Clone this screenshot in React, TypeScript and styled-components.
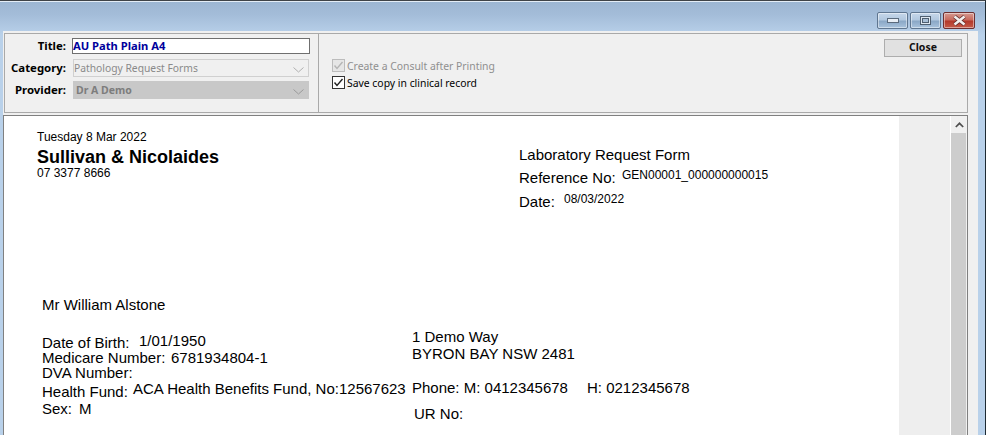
import React from "react";
import styled, { createGlobalStyle } from "styled-components";

const Global = createGlobalStyle`
  html, body { margin: 0; padding: 0; background: #b9d1ea; }
  #root { width: 986px; height: 435px; overflow: hidden; }
`;

const Frame = styled.div`
  width: 986px;
  height: 435px;
  box-sizing: border-box;
  display: flex;
  flex-direction: column;
  overflow: hidden;
  border-top: 1px solid #3f4347;
  border-right: 1px solid #1d2a33;
  background: linear-gradient(180deg, #9cb6d2 0, #a4bdd9 14px, #b9d1ea 34px);
`;

const TitleBar = styled.div`
  height: 30px;
  flex: none;
  box-sizing: border-box;
  display: flex;
  justify-content: flex-end;
  align-items: flex-start;
  padding: 10px 10px 0 0;
  gap: 2px;
  border-top: 1px solid #e4edf6;
`;

const WinButton = styled.div<{ $close?: boolean }>`
  width: ${(p) => (p.$close ? 32 : 31)}px;
  height: 17px;
  box-sizing: border-box;
  display: flex;
  align-items: center;
  justify-content: center;
  border: 1px solid ${(p) => (p.$close ? "#6d2f30" : "#5f7690")};
  border-radius: 2px;
  box-shadow: inset 0 0 0 1px rgba(255, 255, 255, 0.45);
  background: ${(p) =>
    p.$close
      ? "linear-gradient(180deg,#d59a91 0,#c86a5d 45%,#b3392b 55%,#c55a48 100%)"
      : "linear-gradient(180deg,#c6d7ea 0,#b2c8df 45%,#8ba8c6 55%,#a9c3dd 100%)"};
`;

const Client = styled.div`
  flex: 1;
  min-height: 0;
  margin: 0 1px 0 3px;
  display: flex;
  flex-direction: column;
  width: 978px;
  box-sizing: border-box;
`;

const Workspace = styled.div`
  flex: 1;
  min-height: 0;
  width: 975px;
  box-sizing: border-box;
  background: #f0f0f0;
  padding: 2px 10px 0 1px;
  display: flex;
  flex-direction: column;
  gap: 2px;
`;

const Toolbar = styled.div`
  flex: none;
  height: 80px;
  box-sizing: border-box;
  border: 1px solid #a9a9a9;
  display: grid;
  grid-template-columns: 314px 1fr 83px;
  color: #000;
`;

const FieldPanel = styled.div`
  border-right: 1px solid #a9a9a9;
  display: grid;
  grid-template-columns: 61px 238px;
  grid-auto-rows: 22px;
  column-gap: 6px;
  align-content: start;
  padding-top: 4px;
`;

const FieldLabel = styled.label`
  font-family: "Noto Sans", sans-serif;
  font-size: 11.4px;
  font-weight: 700;
  text-align: right;
  line-height: 16px;
  color: #000;
`;

const TitleInput = styled.div`
  height: 16px;
  box-sizing: border-box;
  border: 1px solid #6f6f6f;
  background: #fff;
  color: #00009c;
  font-family: "Noto Sans", sans-serif;
  font-size: 11.2px;
  font-weight: 700;
  line-height: 14px;
`;

const Select = styled.div<{ $filled?: boolean }>`
  height: 18px;
  width: 236px;
  box-sizing: border-box;
  border: 1px solid ${(p) => (p.$filled ? "#c8c8c8" : "#d0d0d0")};
  background: ${(p) => (p.$filled ? "#c8c8c8" : "#f0f0f0")};
  color: ${(p) => (p.$filled ? "#7d7d7d" : "#8a8a8a")};
  font-family: "Noto Sans", sans-serif;
  font-size: ${(p) => (p.$filled ? 10.5 : 10.3)}px;
  font-weight: ${(p) => (p.$filled ? 700 : 400)};
  line-height: 15px;
  padding-left: ${(p) => (p.$filled ? 2 : 0)}px;
  margin-left: 1px;
  display: flex;
  justify-content: space-between;
  align-items: center;
  margin-top: -1px;
`;

const Chevron = styled.svg`
  width: 11px;
  height: 6px;
  margin-right: 4px;
  margin-top: 3px;
  flex: none;
`;

const OptionsPanel = styled.div`
  display: flex;
  flex-direction: column;
  gap: 4px;
  padding: 25px 0 0 13px;
`;

const OptionRow = styled.div<{ $disabled?: boolean }>`
  display: flex;
  align-items: center;
  gap: 2px;
  height: 13px;
  font-family: "Noto Sans", sans-serif;
  font-size: 10.4px;
  color: ${(p) => (p.$disabled ? "#8f8f8f" : "#000")};
`;

const Check = styled.svg`
  width: 13px;
  height: 13px;
  flex: none;
`;

const ClosePanel = styled.div`
  padding: 5px 0 0 0;
`;

const CloseButton = styled.div`
  width: 78px;
  height: 18px;
  box-sizing: border-box;
  border: 1px solid #adadad;
  background: #e1e1e1;
  font-family: "Noto Sans", sans-serif;
  font-size: 10.5px;
  font-weight: 700;
  line-height: 15px;
  text-align: center;
  color: #111;
`;

const DocumentArea = styled.div`
  flex: 1;
  min-height: 0;
  box-sizing: border-box;
  border-top: 1px solid #808080;
  border-left: 1px solid #808080;
  border-right: 1px solid #808080;
  margin-left: -1px;
  display: flex;
  background: #f0f0f0;
`;

const Paper = styled.div`
  position: relative;
  width: 895px;
  flex: none;
  background: #fff;
  overflow: hidden;
  font-family: "Liberation Sans", Arial, sans-serif;
  color: #000;
`;

const Gutter = styled.div`
  flex: 1;
  background: #eeeeee;
`;

const Scrollbar = styled.div`
  width: 17px;
  flex: none;
  background: #f0f0f0;
  border-left: 1px solid #fff;
  box-sizing: border-box;
  display: flex;
  flex-direction: column;
`;

const ScrollUp = styled.div`
  height: 17px;
  flex: none;
  display: flex;
  align-items: center;
  justify-content: center;
`;

const ScrollThumb = styled.div`
  flex: 1;
  background: #cdcdcd;
  margin-right: 1px;
`;

const PaperText = styled.div<{ $x: number; $y: number; $size: number; $bold?: boolean }>`
  position: absolute;
  left: ${(p) => p.$x}px;
  top: ${(p) => p.$y}px;
  font-size: ${(p) => p.$size}px;
  font-weight: ${(p) => (p.$bold ? 700 : 400)};
  line-height: ${(p) => (p.$size >= 15 ? 0.9 : 1)};
  white-space: pre;
`;

const items: [number, number, number, string, boolean?][] = [
  [33, 15, 12, "Tuesday 8 Mar 2022"],
  [33, 33, 18, "Sullivan & Nicolaides", true],
  [33, 51, 12, "07 3377 8666"],
  [515, 32, 15, "Laboratory Request Form"],
  [515, 55, 15, "Reference No:"],
  [618, 53, 12, "GEN00001_000000000015"],
  [515, 79, 15, "Date:"],
  [560, 77, 12, "08/03/2022"],
  [38, 182, 15, "Mr William Alstone"],
  [38, 220, 15, "Date of Birth:"],
  [135, 218, 15, "1/01/1950"],
  [38, 235, 15, "Medicare Number:"],
  [167, 235, 15, "6781934804-1"],
  [38, 250, 15, "DVA Number:"],
  [38, 269, 15, "Health Fund:"],
  [129, 266, 15, "ACA Health Benefits Fund, No:12567623"],
  [38, 286, 15, "Sex:"],
  [75, 286, 15, "M"],
  [408, 214, 15, "1 Demo Way"],
  [408, 231, 15, "BYRON BAY NSW 2481"],
  [408, 265, 15, "Phone: M: 0412345678"],
  [583, 265, 15, "H: 0212345678"],
  [410, 291, 15, "UR No:"],
];

const ChevronIcon = ({ color }: { color: string }) => (
  <Chevron viewBox="0 0 11 6">
    <path d="M0.5 0.5 L5.5 5 L10.5 0.5" fill="none" stroke={color} strokeWidth="1" />
  </Chevron>
);

const CheckIcon = ({ disabled }: { disabled?: boolean }) => (
  <Check viewBox="0 0 13 13">
    <rect x="0.5" y="0.5" width="12" height="12" fill={disabled ? "#e6e6e6" : "#fff"} stroke={disabled ? "#bcbcbc" : "#333"} />
    <path d="M2.5 6.5 L5 9.5 L10.5 3" fill="none" stroke={disabled ? "#b5b5b5" : "#222"} strokeWidth="1.4" />
  </Check>
);

export default function App() {
  return (
    <>
      <Global />
      <Frame>
        <TitleBar>
          <WinButton>
            <svg width="12" height="5" viewBox="0 0 12 5">
              <rect x="0.5" y="0.5" width="11" height="4" fill="#e8eef5" stroke="#5a6a7c" />
            </svg>
          </WinButton>
          <WinButton>
            <svg width="11" height="9" viewBox="0 0 11 9">
              <rect x="0.5" y="0.5" width="10" height="8" fill="#dfe8f1" stroke="#4f5f70" />
              <rect x="2.5" y="2.5" width="6" height="4" fill="#a9bfd6" stroke="#4f5f70" />
            </svg>
          </WinButton>
          <WinButton $close>
            <svg width="15" height="11" viewBox="0 0 15 11">
              <path d="M2.5 1.5 L12.5 9.5 M12.5 1.5 L2.5 9.5" stroke="#5a2a2a" strokeWidth="4" />
              <path d="M2.5 1.5 L12.5 9.5 M12.5 1.5 L2.5 9.5" stroke="#f3f0ef" strokeWidth="2.6" />
            </svg>
          </WinButton>
        </TitleBar>
        <Client>
          <Workspace>
            <Toolbar>
              <FieldPanel>
                <FieldLabel>Title:</FieldLabel>
                <TitleInput>AU Path Plain A4</TitleInput>
                <FieldLabel>Category:</FieldLabel>
                <Select>
                  Pathology Request Forms
                  <ChevronIcon color="#b0b0b0" />
                </Select>
                <FieldLabel>Provider:</FieldLabel>
                <Select $filled>
                  Dr A Demo
                  <ChevronIcon color="#9a9a9a" />
                </Select>
              </FieldPanel>
              <OptionsPanel>
                <OptionRow $disabled>
                  <CheckIcon disabled />
                  Create a Consult after Printing
                </OptionRow>
                <OptionRow>
                  <CheckIcon />
                  Save copy in clinical record
                </OptionRow>
              </OptionsPanel>
              <ClosePanel>
                <CloseButton>Close</CloseButton>
              </ClosePanel>
            </Toolbar>
            <DocumentArea>
              <Paper>
                {items.map(([x, y, size, text, bold]) => (
                  <PaperText key={text} $x={x} $y={y} $size={size} $bold={bold}>
                    {text}
                  </PaperText>
                ))}
              </Paper>
              <Gutter />
              <Scrollbar>
                <ScrollUp>
                  <svg width="9" height="6" viewBox="0 0 9 6">
                    <path d="M0.8 5 L4.5 1.3 L8.2 5" fill="none" stroke="#505050" strokeWidth="1.7" />
                  </svg>
                </ScrollUp>
                <ScrollThumb />
              </Scrollbar>
            </DocumentArea>
          </Workspace>
        </Client>
      </Frame>
    </>
  );
}
